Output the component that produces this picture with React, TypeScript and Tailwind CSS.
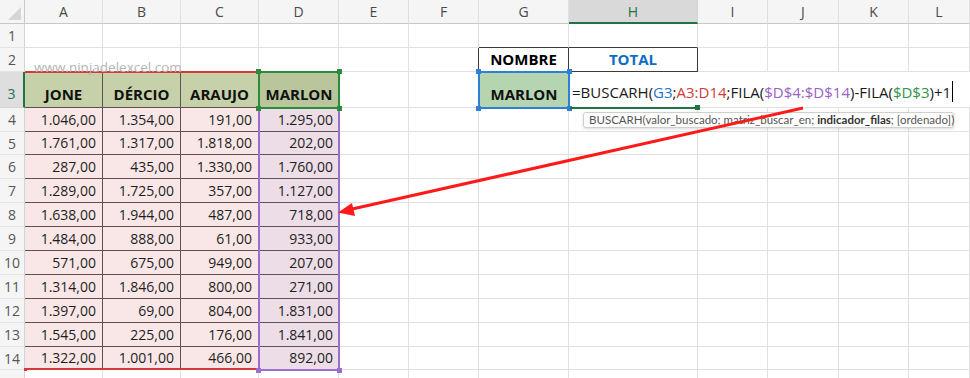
import React, { ReactNode } from 'react';

const COLUMNS = ['A', 'B', 'C', 'D', 'E', 'F', 'G', 'H', 'I', 'J', 'K', 'L'];

const NAMES = ['JONE', 'DÉRCIO', 'ARAUJO', 'MARLON'];

const VALUES: string[][] = [
  ['1.046,00', '1.354,00', '191,00', '1.295,00'],
  ['1.761,00', '1.317,00', '1.818,00', '202,00'],
  ['287,00', '435,00', '1.330,00', '1.760,00'],
  ['1.289,00', '1.725,00', '357,00', '1.127,00'],
  ['1.638,00', '1.944,00', '487,00', '718,00'],
  ['1.484,00', '888,00', '61,00', '933,00'],
  ['571,00', '675,00', '949,00', '207,00'],
  ['1.314,00', '1.846,00', '800,00', '271,00'],
  ['1.397,00', '69,00', '804,00', '1.831,00'],
  ['1.545,00', '225,00', '176,00', '1.841,00'],
  ['1.322,00', '1.001,00', '466,00', '892,00'],
];

const FONT = { fontFamily: '"Open Sans", "Noto Sans", sans-serif' };
const TIP_FONT = { fontFamily: 'Lato, "Open Sans", sans-serif' };

const GRID_LINE = 'border-r border-b border-[#e1e1e1]';
const TABLE_LINE = 'border-r border-b border-[#5b5252]';

// colored formula text shown while H3 is being edited
const Formula: React.FC = () => (
  <span className="whitespace-nowrap text-[15px] leading-none text-[#1a1a1a]">
    =BUSCARH(
    <span className="text-[#1f73c9]">G3</span>;
    <span className="text-[#d13b3b]">A3:D14</span>;FILA(
    <span className="text-[#9a5fc9]">$D$4:$D$14</span>)-FILA(
    <span className="text-[#2f9447]">$D$3</span>)+1
    <span className="inline-block w-px h-[21px] bg-black align-middle ml-[1px] -mt-[4px]" />
  </span>
);

type CellProps = { row: number; col: number };

const Cell: React.FC<CellProps> = ({ row, col }) => {
  let cls = GRID_LINE;
  let body: ReactNode = null;

  if (row === 1 && (col === 6 || col === 7)) {
    cls = 'border-r border-b border-[#e1e1e1] border-b-[#3b3b3b]';
  }

  if (row === 2) {
    if (col === 0) {
      body = (
        <span className="relative z-10 whitespace-nowrap text-[13.5px] leading-none text-[#b4b4b4] pl-[9px] translate-y-[3px]">
          www.ninjadelexcel.com
        </span>
      );
      cls = GRID_LINE + ' items-end';
    }
    if (col === 5) cls = 'border-r border-b border-[#e1e1e1] border-r-[#3b3b3b]';
    if (col === 6) {
      cls = 'border-r border-b border-[#3b3b3b] justify-center items-end pb-[1px]';
      body = <span className="text-[15px] font-bold text-black">NOMBRE</span>;
    }
    if (col === 7) {
      cls = 'border-r border-b border-[#3b3b3b] justify-center items-end pb-[1px]';
      body = <span className="text-[15px] font-bold text-[#0b6fc6]">TOTAL</span>;
    }
  }

  if (row === 3) {
    if (col <= 2) {
      cls = TABLE_LINE + ' bg-[#c6d1aa] justify-center items-end pb-[2px]';
      body = <span className="text-[15px] font-bold text-[#111]">{NAMES[col]}</span>;
    }
    if (col === 3) {
      cls = 'border-b border-[#5b5252] bg-[#b9c69c] justify-center items-end pb-[2px]';
      body = <span className="text-[15px] font-bold text-[#111]">{NAMES[col]}</span>;
    }
    if (col === 6) {
      cls = 'border-b border-[#e1e1e1] bg-[#b5d5b1] justify-center items-end pb-[2px]';
      body = <span className="text-[15px] font-bold text-[#111]">MARLON</span>;
    }
    if (col === 7) {
      cls = 'border-b border-[#e1e1e1] items-end pb-[3px] pl-[3px]';
      body = (
        <span className="relative z-10">
          <Formula />
        </span>
      );
    }
    if (col >= 8) cls = 'border-b border-[#e1e1e1]';
  }

  if (row >= 4 && row <= 14 && col <= 3) {
    const v = VALUES[row - 4][col];
    cls =
      (col === 3 ? 'border-b border-[#5b5252] bg-[#ecdde7]' : TABLE_LINE + ' bg-[#f9e7e7]') +
      ' justify-end items-end pb-[1px] pr-[6px]';
    body = <span className="text-[14px] text-[#1e1e1e]">{v}</span>;
  }

  return <div className={'flex overflow-visible ' + cls}>{body}</div>;
};

const RowHeader: React.FC<{ row: number; label?: boolean }> = ({ row, label = true }) => {
  const active = row === 3;
  return (
    <div
      className={
        'flex items-center justify-center border-b text-[14px] ' +
        (active
          ? 'bg-[#dedede] text-[#217346] border-r-2 border-r-[#217346] border-b-[#d4d4d4] pt-[8px]'
          : 'bg-[#f5f5f5] text-[#555] border-r border-r-[#d4d4d4] border-b-[#e4e4e4]')
      }
    >
      {label ? row : null}
    </div>
  );
};

const ColumnHeader: React.FC<{ letter: string }> = ({ letter }) => {
  const active = letter === 'H';
  return (
    <div
      className={
        'flex items-center justify-center text-[14px] border-r ' +
        (active
          ? 'bg-[#d9d9d9] text-[#217346] border-r-[#d4d4d4] border-b-2 border-b-[#217346]'
          : 'bg-[#f5f5f5] text-[#4a4a4a] border-r-[#e0e0e0] border-b border-b-[#c9c9c9]')
      }
    >
      {letter}
    </div>
  );
};

// colored outline Excel draws around a referenced range, with corner handles
const RangeBox: React.FC<{ className: string; handle: string; top?: boolean }> = ({
  className,
  handle,
  top = true,
}) => (
  <div className={'absolute border-2 flex flex-col justify-between ' + className}>
    <div className={'flex justify-between -mx-[4px] -mt-[4px] ' + (top ? '' : 'invisible')}>
      <span className={'w-[5px] h-[5px] ' + handle} />
      <span className={'w-[5px] h-[5px] ' + handle} />
    </div>
    <div className="flex justify-between -mx-[4px] -mb-[4px]">
      <span className={'w-[5px] h-[5px] ' + handle} />
      <span className={'w-[5px] h-[5px] ' + handle} />
    </div>
  </div>
);

export default function App() {
  const rows = Array.from({ length: 15 }, (_, i) => i + 1);

  return (
    <div className="relative w-[970px] h-[378px] overflow-hidden bg-white" style={FONT}>
      <div className="grid grid-cols-[25px_78px_78px_78px_80px_70px_70px_90px_129px_70px_71px_70px_1fr] grid-rows-[24px_24px_24px_36px_24px_23px_24px_24px_24px_24px_24px_24px_24px_24px_23px_24px]">
        <div className="relative bg-[#f5f5f5] border-r border-b border-[#c9c9c9]">
          <svg className="absolute inset-0" width="25" height="24" viewBox="0 0 25 24">
            <polygon points="8,20 21,20 21,7" fill="#d6d6d6" />
          </svg>
        </div>
        {COLUMNS.map(l => (
          <ColumnHeader key={l} letter={l} />
        ))}

        {rows.map(r => (
          <React.Fragment key={r}>
            <RowHeader row={r} label={r < 15} />
            {COLUMNS.map((_, c) => (
              <Cell key={c} row={r} col={c} />
            ))}
          </React.Fragment>
        ))}
      </div>

      {/* A3:D14 reference (red) */}
      <div className="absolute left-[25px] top-[71px] w-[234px] h-[2px] bg-[#d23a3a]" />
      <div className="absolute left-[24px] top-[368px] w-[235px] h-[3px] border-t-2 border-l-[3px] border-[#d23a3a]" />

      <RangeBox className="left-[258px] top-[107px] w-[82px] h-[264px] border-[#9b6fcf]" handle="bg-[#9b6fcf]" top={false} />
      <RangeBox className="left-[258px] top-[71px] w-[82px] h-[38px] border-[#2c8a3c]" handle="bg-[#2c8a3c]" />
      <RangeBox className="left-[478px] top-[71px] w-[92px] h-[38px] border-[#2f7fd6]" handle="bg-[#2f7fd6]" />

      {/* active cell edge under H3 */}
      <div className="absolute left-[570px] top-[107px] w-[130px] h-[5px] flex items-start justify-between">
        <span className="w-[126px] h-[2px] bg-[#217346]" />
        <span className="w-[5px] h-[5px] -mt-[2px] bg-[#217346]" />
      </div>

      {/* function argument tip */}
      <div
        className="absolute left-[583px] top-[112px] w-[371px] h-[16px] flex items-center pl-[5px] bg-white border border-[#cfcfcf] rounded-[3px] shadow-[0_1px_3px_rgba(0,0,0,0.15)] text-[11.5px] text-[#555] whitespace-nowrap"
        style={TIP_FONT}
      >
        BUSCARH(valor_buscado; matriz_buscar_en;&nbsp;
        <span className="font-bold text-[#333]">indicador_filas</span>; [ordenado])
      </div>

      {/* red arrow */}
      <svg className="absolute inset-0 pointer-events-none" width="970" height="378" viewBox="0 0 970 378">
        <line x1="803" y1="108" x2="350" y2="209.5" stroke="#ff1a1a" strokeWidth="3" />
        <polygon points="338,212.5 352,203 355,216" fill="#ff1a1a" />
      </svg>
    </div>
  );
}
